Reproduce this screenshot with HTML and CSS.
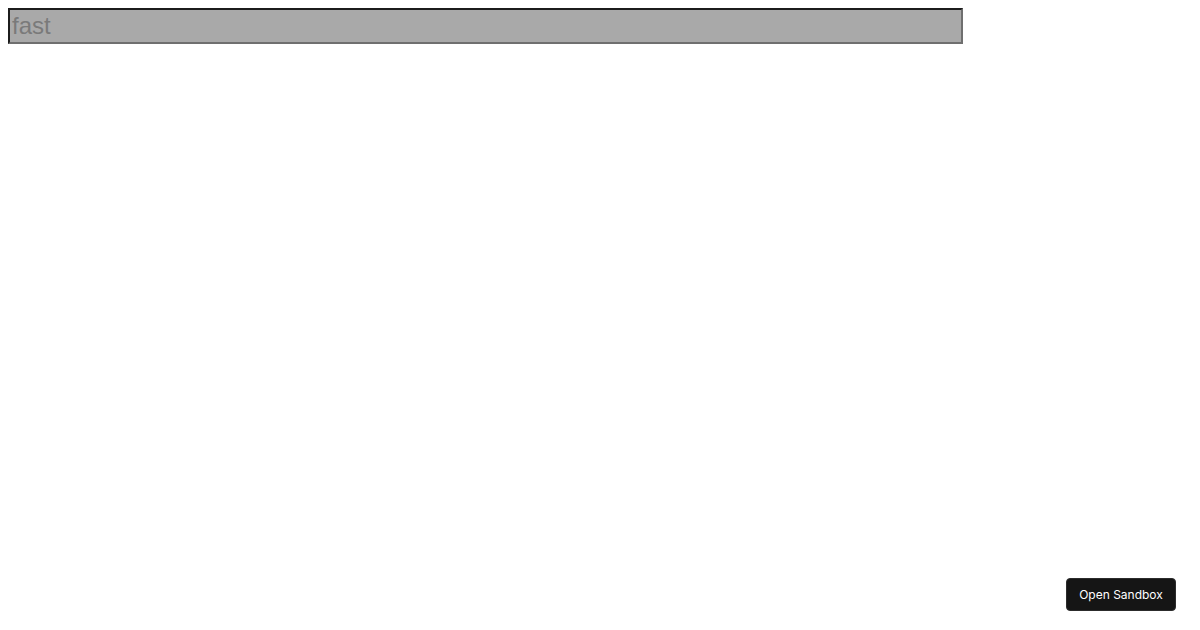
FILE: index.html
```html
<!DOCTYPE html>
<html>
<head>
<meta charset="utf-8">
<link rel="stylesheet" href="styles.css">
</head>
<body>
<input class="field" type="text" value="fast">
<a class="open-sandbox" href="#">Open Sandbox</a>
</body>
</html>
```
FILE: styles.css
```css
html, body {
  margin: 0;
  padding: 0;
  background: #ffffff;
}
body {
  padding: 8px;
  font-family: "Liberation Sans", Arial, sans-serif;
}
.field {
  display: block;
  box-sizing: border-box;
  width: 955px;
  height: 36px;
  margin: 0;
  padding: 0 2px;
  background: #a9a9a9;
  color: #7a7a7a;
  font-family: "Liberation Sans", Arial, sans-serif;
  font-size: 24px;
  border-width: 2px;
  border-style: solid;
  border-color: #1c1c1c #6f6f6f #6f6f6f #1c1c1c;
  outline: none;
}
.open-sandbox {
  position: fixed;
  right: 24px;
  bottom: 19px;
  box-sizing: border-box;
  width: 110px;
  height: 33px;
  display: flex;
  align-items: center;
  justify-content: center;
  background: #151515;
  border: 1px solid #2c2c2c;
  border-radius: 4px;
  color: #ffffff;
  font-family: Inter, "Liberation Sans", sans-serif;
  font-size: 12px;
  text-decoration: none;
}
```
